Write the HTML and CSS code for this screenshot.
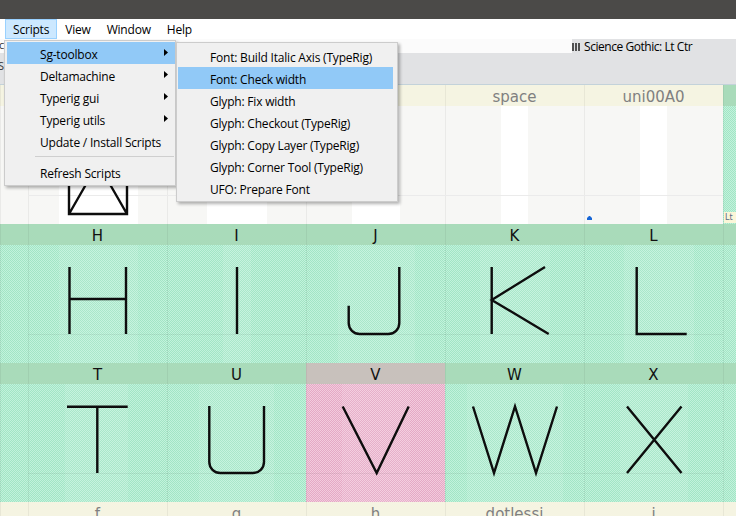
FILE: index.html
```html
<!DOCTYPE html>
<html>
<head>
<meta charset="utf-8">
<title>Font window</title>
<link rel="stylesheet" href="styles.css">
</head>
<body>
<div class="titlebar"></div>
<div class="menubar">
  <span class="mi active">Scripts</span><span class="mi">View</span><span class="mi">Window</span><span class="mi">Help</span>
</div>
<div class="toolbar">
  <div class="tb-left">
    <div class="tb-search">c</div>
    <div class="tb-tool">S</div>
  </div>
  <div class="fontname">
    <svg class="bars" width="10" height="8" viewBox="0 0 10 8"><rect x="0" y="0" width="2" height="8"/><rect x="3" y="0" width="2" height="8"/><rect x="6" y="0" width="2" height="8"/></svg>
    <span>Science Gothic: Lt Ctr</span>
  </div>
</div>

<div class="grid">
  <!-- row 1 -->
  <div class="cell plain edge"><div class="hd"></div><div class="bd"></div></div>
  <div class="cell plain"><div class="hd"></div><div class="bd">
    <svg class="gl" width="139" height="118" viewBox="0 0 139 118"><rect class="adv" x="31" y="0" width="79" height="118"/><line class="base" x1="0" y1="89.5" x2="139" y2="89.5"/><path class="g" d="M41 7 H99 V108 H41 Z M41 7 L99 108 M99 7 L41 108"/></svg>
  </div></div>
  <div class="cell plain"><div class="hd"></div><div class="bd">
    <svg class="gl" width="139" height="118" viewBox="0 0 139 118"><rect class="adv" x="40" y="0" width="60" height="118"/><line class="base" x1="0" y1="89.5" x2="139" y2="89.5"/></svg>
  </div></div>
  <div class="cell plain"><div class="hd"></div><div class="bd">
    <svg class="gl" width="139" height="118" viewBox="0 0 139 118"><rect class="adv" x="46" y="0" width="48" height="118"/><line class="base" x1="0" y1="89.5" x2="139" y2="89.5"/></svg>
  </div></div>
  <div class="cell plain"><div class="hd gray">space</div><div class="bd">
    <svg class="gl" width="139" height="118" viewBox="0 0 139 118"><rect class="adv" x="56" y="0" width="27" height="118"/><line class="base" x1="0" y1="89.5" x2="139" y2="89.5"/></svg>
  </div></div>
  <div class="cell plain"><div class="hd gray">uni00A0</div><div class="bd">
    <svg class="gl" width="139" height="118" viewBox="0 0 139 118"><rect class="adv" x="56" y="0" width="27" height="118"/><line class="base" x1="0" y1="89.5" x2="139" y2="89.5"/><path class="mark" d="M3 114 V112 L5 110 H6 L8 112 V114 Z"/></svg>
  </div></div>
  <div class="cell green edge"><div class="hd"></div><div class="bd stack"><span class="badge">Lt</span></div></div>

  <!-- row 2 -->
  <div class="cell green edge"><div class="hd"></div><div class="bd"></div></div>
  <div class="cell green"><div class="hd">H</div><div class="bd">
    <svg class="gl" width="139" height="118" viewBox="0 0 139 118"><rect class="adv" x="31" y="0" width="79" height="118"/><line class="base" x1="0" y1="89.5" x2="139" y2="89.5"/><path class="g" d="M41.5 22 V89 M98 22 V89 M41.5 54 H98"/></svg>
  </div></div>
  <div class="cell green"><div class="hd">I</div><div class="bd">
    <svg class="gl" width="139" height="118" viewBox="0 0 139 118"><rect class="adv" x="56" y="0" width="28" height="118"/><line class="base" x1="0" y1="89.5" x2="139" y2="89.5"/><path class="g" d="M70 22 V89"/></svg>
  </div></div>
  <div class="cell green"><div class="hd">J</div><div class="bd">
    <svg class="gl" width="139" height="118" viewBox="0 0 139 118"><rect class="adv" x="32" y="0" width="77" height="118"/><line class="base" x1="0" y1="89.5" x2="139" y2="89.5"/><path class="g" d="M93.3 22 V78 A11 11 0 0 1 82.3 89 H53.7 A11 11 0 0 1 42.7 78 V60.7"/></svg>
  </div></div>
  <div class="cell green"><div class="hd">K</div><div class="bd">
    <svg class="gl" width="139" height="118" viewBox="0 0 139 118"><rect class="adv" x="35" y="0" width="70" height="118"/><line class="base" x1="0" y1="89.5" x2="139" y2="89.5"/><path class="g" d="M46.7 22 V89 M100 22 L46.7 55 L103.7 89"/></svg>
  </div></div>
  <div class="cell green"><div class="hd">L</div><div class="bd">
    <svg class="gl" width="139" height="118" viewBox="0 0 139 118"><rect class="adv" x="40" y="0" width="70" height="118"/><line class="base" x1="0" y1="89.5" x2="139" y2="89.5"/><path class="g" d="M52.7 22 V89 H102.7"/></svg>
  </div></div>
  <div class="cell green edge"><div class="hd"></div><div class="bd"></div></div>

  <!-- row 3 -->
  <div class="cell green edge"><div class="hd"></div><div class="bd"></div></div>
  <div class="cell green"><div class="hd">T</div><div class="bd">
    <svg class="gl" width="139" height="118" viewBox="0 0 139 118"><rect class="adv" x="37" y="0" width="63" height="118"/><line class="base" x1="0" y1="89.5" x2="139" y2="89.5"/><path class="g" d="M39 22.7 H99.7 M69.3 22.7 V89"/></svg>
  </div></div>
  <div class="cell green"><div class="hd">U</div><div class="bd">
    <svg class="gl" width="139" height="118" viewBox="0 0 139 118"><rect class="adv" x="32" y="0" width="75" height="118"/><line class="base" x1="0" y1="89.5" x2="139" y2="89.5"/><path class="g" d="M42.3 22 V78 A11 11 0 0 0 53.3 89 H86 A11 11 0 0 0 97 78 V22"/></svg>
  </div></div>
  <div class="cell pink"><div class="hd">V</div><div class="bd">
    <svg class="gl" width="139" height="118" viewBox="0 0 139 118"><rect class="adv" x="36" y="0" width="68" height="118"/><line class="base" x1="0" y1="89.5" x2="139" y2="89.5"/><path class="g" d="M36.7 22.5 L70.7 89 L102.7 22.5"/></svg>
  </div></div>
  <div class="cell green"><div class="hd">W</div><div class="bd">
    <svg class="gl" width="139" height="118" viewBox="0 0 139 118"><rect class="adv" x="22" y="0" width="96" height="118"/><line class="base" x1="0" y1="89.5" x2="139" y2="89.5"/><path class="g" d="M28 22.5 L49 89 L70 22.5 L91 89 L112 22.5"/></svg>
  </div></div>
  <div class="cell green"><div class="hd">X</div><div class="bd">
    <svg class="gl" width="139" height="118" viewBox="0 0 139 118"><rect class="adv" x="36" y="0" width="68" height="118"/><line class="base" x1="0" y1="89.5" x2="139" y2="89.5"/><path class="g" d="M43 22.5 L97.5 89 M97.5 22.5 L43 89"/></svg>
  </div></div>
  <div class="cell green edge"><div class="hd"></div><div class="bd"></div></div>

  <!-- row 4 -->
  <div class="cell plain edge"><div class="hd"></div><div class="bd"></div></div>
  <div class="cell plain"><div class="hd gray">f</div><div class="bd"></div></div>
  <div class="cell plain"><div class="hd gray">g</div><div class="bd"></div></div>
  <div class="cell plain"><div class="hd gray">h</div><div class="bd"></div></div>
  <div class="cell plain"><div class="hd gray">dotlessi</div><div class="bd"></div></div>
  <div class="cell plain"><div class="hd gray">j</div><div class="bd"></div></div>
  <div class="cell plain edge"><div class="hd"></div><div class="bd"></div></div>
</div>

<div class="menu main-menu">
  <div class="item hl">Sg-toolbox<svg class="arr" width="4" height="7" viewBox="0 0 4 7"><path d="M0 0 L4 3.5 L0 7 Z"/></svg></div>
  <div class="item">Deltamachine<svg class="arr" width="4" height="7" viewBox="0 0 4 7"><path d="M0 0 L4 3.5 L0 7 Z"/></svg></div>
  <div class="item">Typerig gui<svg class="arr" width="4" height="7" viewBox="0 0 4 7"><path d="M0 0 L4 3.5 L0 7 Z"/></svg></div>
  <div class="item">Typerig utils<svg class="arr" width="4" height="7" viewBox="0 0 4 7"><path d="M0 0 L4 3.5 L0 7 Z"/></svg></div>
  <div class="item">Update / Install Scripts</div>
  <div class="sep"></div>
  <div class="item">Refresh Scripts</div>
</div>

<div class="menu sub-menu">
  <div class="item">Font: Build Italic Axis (TypeRig)</div>
  <div class="item hl">Font: Check width</div>
  <div class="item">Glyph: Fix width</div>
  <div class="item">Glyph: Checkout (TypeRig)</div>
  <div class="item">Glyph: Copy Layer (TypeRig)</div>
  <div class="item">Glyph: Corner Tool (TypeRig)</div>
  <div class="item">UFO: Prepare Font</div>
</div>
</body>
</html>
```

FILE: styles.css
```css
* { box-sizing: border-box; }
html, body { margin: 0; padding: 0; }
body {
  width: 736px;
  height: 516px;
  overflow: hidden;
  position: relative;
  background: #ffffff;
  font-family: "Open Sans", "Noto Sans", sans-serif;
  font-size: 12px;
  color: #000;
}

.titlebar { height: 19px; background: #4b4a48; }

.menubar {
  height: 20px;
  display: flex;
  padding-left: 5px;
  background: #ffffff;
}
.mi {
  padding: 0 7px;
  border: 1px solid transparent;
  line-height: 20px;
  letter-spacing: -0.2px;
}
.mi.active { background: #cce8ff; border-color: #99d1ff; }

.toolbar {
  height: 46px;
  background: #e1e2e4;
  border-bottom: 1px solid #c3d2da;
  display: grid;
  grid-template-columns: 572px auto;
}
.tb-left { display: flex; flex-direction: column; }
.tb-search {
  height: 14px;
  background: #fbfbfb;
  font-size: 11px;
  line-height: 12px;
  margin-left: -1px;
  color: #333;
}
.tb-tool {
  height: 22px;
  font-size: 11px;
  line-height: 26px;
  margin-left: -2px;
  color: #333;
}
.fontname {
  display: flex;
  align-items: center;
  gap: 1px;
  height: 15px;
  font-size: 12px;
  letter-spacing: -0.45px;
  white-space: nowrap;
}
.bars { fill: #505050; margin-right: 1px; }

.grid {
  display: grid;
  grid-template-columns: 28px repeat(5, 139px) 13px;
  grid-auto-rows: 139px;
  overflow: hidden;
}
.cell {
  display: flex;
  flex-direction: column;
  overflow: hidden;
}
.hd {
  height: 21px;
  flex: none;
  text-align: center;
  font-family: "DejaVu Sans", sans-serif;
  font-size: 15px;
  line-height: 25px;
  color: #111;
  white-space: nowrap;
  box-shadow: inset 1px 0 rgba(0, 0, 0, 0.05);
}
.hd.gray { color: #808080; }
.bd {
  flex: 1;
  box-shadow: inset 1px 0 rgba(0, 0, 0, 0.05);
}
.gl { display: block; }

.plain .hd { background: #f5f4e2; }
.plain .bd { background: #f7f7f5; }
.plain .adv { fill: #ffffff; }
.plain .base { stroke: #ebebeb; stroke-width: 1; }

.green .hd { background: #a9dbba; }
.green .bd {
  background-color: #b1ebd0;
  background-image: repeating-conic-gradient(#a2e5c5 0 25%, #c2f2dc 0 50%);
  background-size: 2px 2px;
}
.pink .hd { background: #c8c1bc; }
.pink .bd {
  background-color: #ebbad1;
  background-image: repeating-conic-gradient(#e4a9c5 0 25%, #f3cbdd 0 50%);
  background-size: 2px 2px;
}
.green .adv, .pink .adv { fill: rgba(255, 255, 255, 0.09); }
.green .base, .pink .base { stroke: rgba(0, 0, 0, 0.05); stroke-width: 1; }

.g {
  fill: none;
  stroke: #0d0d0d;
  stroke-width: 2.4;
  stroke-linecap: butt;
  stroke-linejoin: miter;
}
.mark { fill: #1766d6; }

.stack {
  display: flex;
  flex-direction: column;
  justify-content: flex-end;
  padding-bottom: 1px;
}
.badge {
  height: 11px;
  margin-left: 1px;
  background: #fbf6d8;
  font-family: "DejaVu Sans", sans-serif;
  font-size: 8px;
  line-height: 11px;
  color: #5d6b86;
  padding-left: 1px;
}

/* menus */
.menu {
  position: absolute;
  background: #f0f0f0;
  border: 1px solid #cccccc;
  box-shadow: 2px 2px 3px rgba(0, 0, 0, 0.3);
  padding: 1px 0 2px;
}
.main-menu { left: 4px; top: 40px; width: 172px; height: 146px; }
.sub-menu { left: 176px; top: 42px; width: 222px; height: 160px; padding-top: 2px; }
.item {
  height: 22px;
  line-height: 25px;
  position: relative;
  white-space: nowrap;
  letter-spacing: -0.2px;
}
.main-menu .item { margin: 0 0 0 2px; padding-left: 33px; }
.sub-menu .item { margin: 0 4px 0 1px; padding-left: 32px; }
.item.hl { background: #91c9f7; }
.arr {
  position: absolute;
  left: 157px;
  top: 7px;
  fill: #000;
}
.sep {
  height: 1px;
  background: #cfcfcf;
  margin: 4px 1px 4px 30px;
}
```
